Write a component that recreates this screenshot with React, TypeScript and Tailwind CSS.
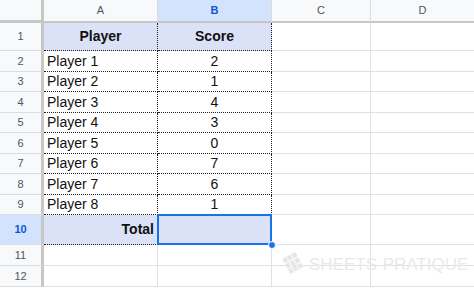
import React from "react";

const rowsH = [28, 21, 20, 21, 20, 21, 20, 21, 20, 30, 21, 21];
const data: [string, string][] = [
  ["Player 1", "2"],
  ["Player 2", "1"],
  ["Player 3", "4"],
  ["Player 4", "3"],
  ["Player 5", "0"],
  ["Player 6", "7"],
  ["Player 7", "6"],
  ["Player 8", "1"],
];

function RowHeader({ n, active, h }: { n: number; active?: boolean; h: number }) {
  return (
    <div
      className={
        "flex items-center justify-center border-r-[3px] border-b border-r-[#c7c7c7] border-b-[#dadce0] text-[11px] " +
        (active ? "bg-[#d3e3fd] text-[#0b57d0] font-bold" : "bg-[#f8f9fa] text-[#555]")
      }
      style={{ height: h }}
    >
      {n}
    </div>
  );
}

export default function App() {
  return (
    <div
      className="relative w-[474px] h-[289px] overflow-hidden bg-white"
      style={{ fontFamily: '"Liberation Sans", Arial, sans-serif' }}
    >
      <div className="grid grid-cols-[44px_114px_114px_99px_103px]">
        {/* header row */}
        <div className="h-[23px] bg-[#f8f9fa] border-r-[3px] border-b-[3px] border-[#c7c7c7]" />
        <div className="h-[23px] bg-[#f8f9fa] border-r border-b-[2px] border-r-[#dadce0] border-b-[#c7c7c7] flex items-center justify-center text-[11px] text-[#555]">A</div>
        <div className="h-[23px] bg-[#d3e3fd] border-r border-b-[2px] border-r-[#dadce0] border-b-[#c7c7c7] flex items-center justify-center text-[11px] font-bold text-[#0b57d0]">B</div>
        <div className="h-[23px] bg-[#f8f9fa] border-r border-b-[2px] border-r-[#dadce0] border-b-[#c7c7c7] flex items-center justify-center text-[11px] text-[#555]">C</div>
        <div className="h-[23px] bg-[#f8f9fa] border-b-[2px] border-b-[#c7c7c7] flex items-center justify-center text-[11px] text-[#555]">D</div>

        {/* row 1 */}
        <RowHeader n={1} h={rowsH[0]} />
        <div className="h-[28px] bg-[#dbe1f6] border-r border-b border-dotted border-[#222] flex items-center justify-center text-[14px] font-bold text-[#111]">Player</div>
        <div className="h-[28px] bg-[#dbe1f6] border-r border-b border-dotted border-[#222] flex items-center justify-center text-[14px] font-bold text-[#111]">Score</div>
        <div className="h-[28px] border-r border-b border-[#e1e1e1]" />
        <div className="h-[28px] border-b border-[#e1e1e1]" />

        {data.map(([p, s], i) => (
          <React.Fragment key={p}>
            <RowHeader n={i + 2} h={rowsH[i + 1]} />
            <div
              className="border-r border-b border-dotted border-[#222] flex items-center pl-[3px] text-[14px] text-[#111]"
              style={{ height: rowsH[i + 1] }}
            >
              {p}
            </div>
            <div
              className="border-r border-b border-dotted border-[#222] flex items-center justify-center text-[14px] text-[#111]"
              style={{ height: rowsH[i + 1] }}
            >
              {s}
            </div>
            <div className="border-r border-b border-[#e1e1e1]" style={{ height: rowsH[i + 1] }} />
            <div className="border-b border-[#e1e1e1]" style={{ height: rowsH[i + 1] }} />
          </React.Fragment>
        ))}

        {/* row 10 */}
        <RowHeader n={10} active h={30} />
        <div className="h-[30px] bg-[#dbe1f6] border-r border-b border-dotted border-[#222] flex items-center justify-end pr-[3px] text-[14px] font-bold text-[#111]">Total</div>
        <div className="relative h-[30px] bg-[#dbe1f6] border-r border-b border-[#e1e1e1]">
          <div className="absolute left-[-1px] top-[-1px] right-[-1px] bottom-[-1px] border-2 border-[#1a73e8]" />
          <div className="absolute right-[-5px] bottom-[-5px] w-[8px] h-[8px] rounded-full bg-[#1a73e8] border border-white" />
        </div>
        <div className="h-[30px] border-r border-b border-[#e1e1e1]" />
        <div className="h-[30px] border-b border-[#e1e1e1]" />

        {/* rows 11-12 */}
        {[11, 12].map((n) => (
          <React.Fragment key={n}>
            <RowHeader n={n} h={21} />
            <div className="h-[21px] border-r border-b border-[#e1e1e1]" />
            <div className="h-[21px] border-r border-b border-[#e1e1e1]" />
            <div className="h-[21px] border-r border-b border-[#e1e1e1]" />
            <div className="h-[21px] border-b border-[#e1e1e1]" />
          </React.Fragment>
        ))}
      </div>

      {/* watermark */}
      <div className="absolute left-[282px] top-[251px] flex items-center gap-[3px] pointer-events-none whitespace-nowrap">
        <svg width="24" height="26" viewBox="0 0 24 26">
          <g fill="#e6e6e6" transform="rotate(-28 12 13)">
            <rect x="4" y="3" width="15" height="5" rx="1" />
            <rect x="4" y="9" width="15" height="5" rx="1" />
            <rect x="4" y="15" width="15" height="5" rx="1" />
            <rect x="8" y="2" width="1.5" height="19" fill="#f4f4f4" />
            <rect x="13" y="2" width="1.5" height="19" fill="#f4f4f4" />
          </g>
        </svg>
        <span className="text-[17px] leading-none text-[#e9e9e9] whitespace-nowrap">
          SHEETS-PRATIQUE
        </span>
      </div>
    </div>
  );
}
